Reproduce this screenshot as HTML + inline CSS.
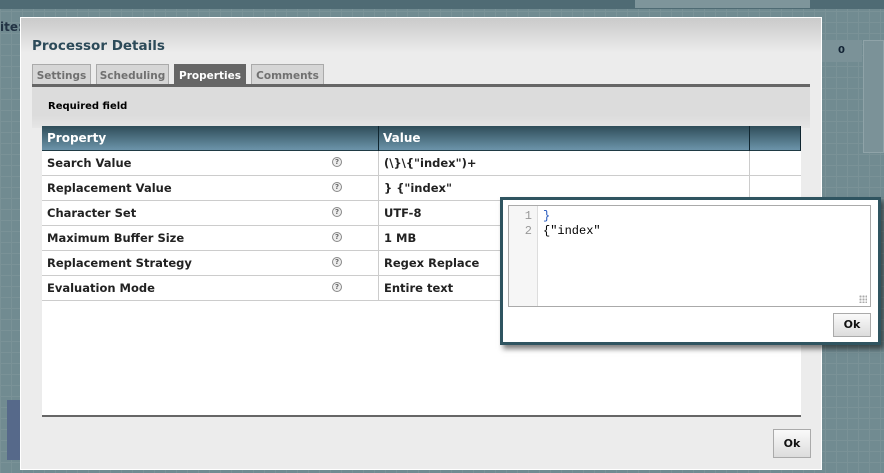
<!DOCTYPE html>
<html><head><style>
*{margin:0;padding:0;box-sizing:border-box}
body{width:884px;height:473px;overflow:hidden;position:relative;font-family:"DejaVu Sans","Liberation Sans",sans-serif;
background-color:#718b91;
background-image:linear-gradient(#7a9297 1px,transparent 1px),linear-gradient(90deg,#7a9297 1px,transparent 1px);background-size:11px 11px}
.a{position:absolute}
.dlg{left:20px;top:17px;width:802px;height:453px;background:linear-gradient(#cacaca 0,#ececec 35px,#ececec 100%);border:1px solid #fff}
.title{left:11px;top:20px;font-size:13.5px;font-weight:bold;color:#2c4a59}
.tab{top:46px;height:21px;font-size:10.5px;font-weight:bold;color:#707070;background:#d6d6d6;border:1px solid #aaa;border-bottom:none;padding:5px 0 0;text-align:center}
.tab.on{background:#666;color:#fff;border-color:#666}
.row{position:absolute;left:0;width:759px;height:25px;border-bottom:1px solid #ccc;font-size:11.5px;font-weight:bold;color:#222}
.row span{position:absolute;top:5px}
.row .p{left:5px}.row .v{left:342px}
.q{position:absolute;left:290px;top:6px!important;width:10px;height:10px;border-radius:50%;border:1px solid #888;font-size:7px;line-height:8px;text-align:center;color:#666;background:#eee}
.btn{background:linear-gradient(#fafafa,#dcdcdc);border:1px solid #aaa;font-size:11px;font-weight:bold;text-align:center;color:#111}
</style></head><body>
<div class="a" style="left:0;top:0;width:884px;height:9px;background:#4f6b74"></div>
<div class="a" style="left:635px;top:0;width:175px;height:8px;background:#7e959b"></div>
<div class="a" style="left:822px;top:40px;width:40px;height:22px;background:#7b9298"></div>
<div class="a" style="left:838px;top:45px;font-size:10px;font-weight:bold;color:#123">0</div>
<div class="a" style="left:863px;top:40px;width:21px;height:113px;background:#7b9298;border:1px solid #8fa3a8"></div>
<div class="a" style="left:0;top:20px;font-size:12px;font-weight:bold;color:#234">ite:</div>
<div class="a" style="left:7px;top:400px;width:13px;height:60px;background:#56698a"></div>
<div class="a dlg">
 <div class="a title">Processor Details</div>
 <div class="a tab" style="left:11px;width:59px">Settings</div>
 <div class="a tab" style="left:75px;width:73px">Scheduling</div>
 <div class="a tab on" style="left:153px;width:72px">Properties</div>
 <div class="a tab" style="left:230px;width:73px">Comments</div>
 <div class="a" style="left:11px;top:66px;width:778px;height:3px;background:#666"></div>
 <div class="a" style="left:11px;top:69px;width:778px;height:41px;background:linear-gradient(#dcdcdc,#dcdcdc 70%,#e6e6e6)"></div>
 <div class="a" style="left:27px;top:83px;font-size:10px;font-weight:bold;color:#000">Required field</div>
 <div class="a" style="left:21px;top:108px;width:759px;height:291px;background:#fff;border-bottom:2px solid #666">
  <div class="a" style="left:0;top:0;width:759px;height:25px;background:linear-gradient(#2f4d59,#6c94aa);border-bottom:1px solid #1f3a44"></div>
  <div class="a" style="left:336px;top:0;width:1px;height:25px;background:#102630"></div>
  <div class="a" style="left:707px;top:0;width:1px;height:25px;background:#102630"></div>
  <div class="a" style="left:758px;top:0;width:1px;height:25px;background:#102630"></div>
  <div class="a" style="left:5px;top:5px;font-size:12px;font-weight:bold;color:#fff">Property</div>
  <div class="a" style="left:341px;top:5px;font-size:12px;font-weight:bold;color:#fff">Value</div>
  <div class="a" style="left:336px;top:25px;width:1px;height:150px;background:#ccc"></div>
  <div class="a" style="left:707px;top:25px;width:1px;height:150px;background:#ccc"></div>
  <div class="row" style="top:25px"><span class="p">Search Value</span><span class="q">?</span><span class="v">(\}\{"index")+</span></div>
  <div class="row" style="top:50px"><span class="p">Replacement Value</span><span class="q">?</span><span class="v">} {"index"</span></div>
  <div class="row" style="top:75px"><span class="p">Character Set</span><span class="q">?</span><span class="v">UTF-8</span></div>
  <div class="row" style="top:100px"><span class="p">Maximum Buffer Size</span><span class="q">?</span><span class="v">1 MB</span></div>
  <div class="row" style="top:125px"><span class="p">Replacement Strategy</span><span class="q">?</span><span class="v">Regex Replace</span></div>
  <div class="row" style="top:150px"><span class="p">Evaluation Mode</span><span class="q">?</span><span class="v">Entire text</span></div>
 </div>
 <div class="a btn" style="left:752px;top:411px;width:38px;height:29px;line-height:27px">Ok</div>
</div>
<div class="a" style="left:500px;top:197px;width:381px;height:148px;background:#fff;border:3px solid #2f5460;box-shadow:3px 4px 5px rgba(0,0,0,.5)">
 <div class="a" style="left:5px;top:5px;width:363px;height:102px;border:1px solid #aaa;background:#fff">
  <div class="a" style="left:0;top:0;width:29px;height:100px;background:#f6f6f6;border-right:1px solid #ddd;font-family:'Liberation Mono',monospace;font-size:12px;color:#999;text-align:right;padding-right:5px;line-height:15px;padding-top:3px">1<br>2</div>
  <div class="a" style="left:34px;top:3px;font-family:'Liberation Mono',monospace;font-size:12px;line-height:15px;color:#000"><span style="color:#2255bb">}</span><br>{"index"</div>
  <div class="a" style="right:3px;bottom:3px;width:8px;height:8px;background:radial-gradient(circle,#aaa 1px,transparent 1.2px) 0 0/3px 3px"></div>
 </div>
 <div class="a btn" style="left:330px;top:113px;width:38px;height:24px;line-height:22px">Ok</div>
</div>
</body></html>
